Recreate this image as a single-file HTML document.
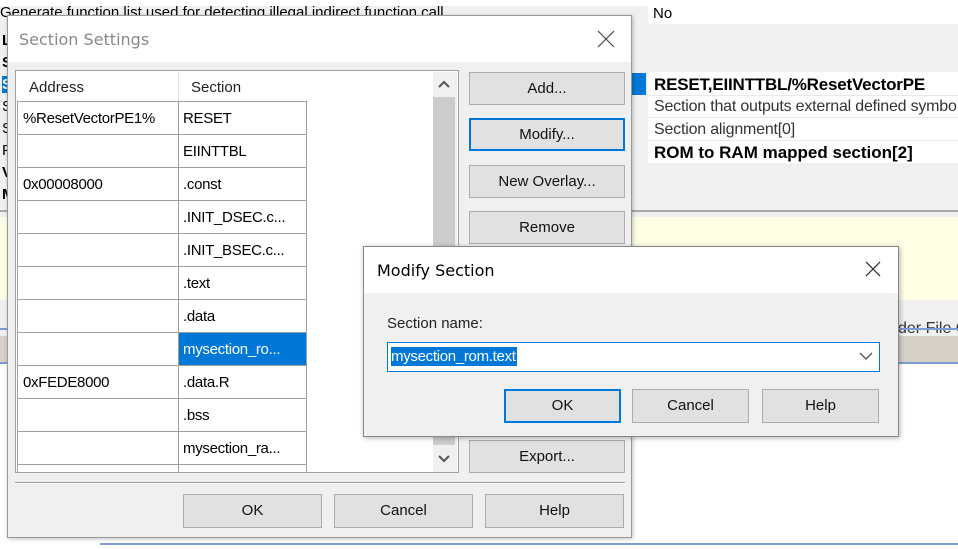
<!DOCTYPE html>
<html><head><meta charset="utf-8"><style>
*{box-sizing:border-box;margin:0;padding:0}
body{width:958px;height:549px;overflow:hidden;background:#f0f0f0;font-family:"Liberation Sans",sans-serif;font-size:15px;color:#000;position:relative}
.a{position:absolute}
.btn{position:absolute;background:#e1e1e1;border:1px solid #adadad;text-align:center;font-size:15px;color:#111}
.btn.f{border:2px solid #0078d7}
.cell{position:absolute;height:33px;border-right:1px solid #a0a0a0;border-bottom:1px solid #a0a0a0;background:#fff;padding:8px 0 0 5px;white-space:nowrap;overflow:hidden;font-size:15px;letter-spacing:-0.3px}
</style></head><body>
<!-- background app -->
<div class="a" style="left:0;top:0;width:958px;height:6px;background:#fff"></div>
<div class="a" style="left:0;top:4px;font-size:15px;white-space:nowrap">Generate function list used for detecting illegal indirect function call</div>
<div class="a" style="left:648px;top:2px;width:310px;height:22px;background:#fff;padding:3px 5px">No</div>
<div class="a" style="left:2px;top:30px;font-weight:bold;line-height:22px;font-size:15px">L<br>S<br><span style="background:#0078d7;color:#fff">S</span><br><span style="font-weight:normal">S<br>S<br>F</span><br>V<br>M</div>
<div class="a" style="left:632px;top:73px;width:14px;height:22px;background:#0078d7"></div>
<div class="a" style="left:648px;top:72px;width:310px;height:91px;background:#fff"></div>
<div class="a" style="left:648px;top:95px;width:310px;height:1px;background:#e8e8e8"></div>
<div class="a" style="left:648px;top:117px;width:310px;height:1px;background:#e8e8e8"></div>
<div class="a" style="left:648px;top:140px;width:310px;height:1px;background:#e8e8e8"></div>
<div class="a" style="left:654px;top:75px;font-weight:bold;white-space:nowrap;font-size:17px;letter-spacing:-0.2px">RESET,EIINTTBL/%ResetVectorPE</div>
<div class="a" style="left:654px;top:98px;white-space:nowrap;color:#333;font-size:16px;letter-spacing:-0.2px">Section that outputs external defined symbo</div>
<div class="a" style="left:654px;top:121px;white-space:nowrap;color:#333;font-size:16px;letter-spacing:-0.2px">Section alignment[0]</div>
<div class="a" style="left:654px;top:143px;font-weight:bold;white-space:nowrap;font-size:17px">ROM to RAM mapped section[2]</div>
<div class="a" style="left:0;top:210px;width:958px;height:2px;background:#a8a8a8"></div>
<div class="a" style="left:0;top:217px;width:958px;height:83px;background:#ffffe6"></div>
<div class="a" style="left:0;top:300px;width:958px;height:28px;background:#f0f0f0"></div>
<div class="a" style="left:898px;top:320px;font-size:16px;color:#333;white-space:nowrap">der File C</div>
<div class="a" style="left:0;top:328px;width:958px;height:2px;background:#7a9cd0"></div>
<div class="a" style="left:0;top:336px;width:958px;height:26px;background:#d4d0c8"></div>
<div class="a" style="left:0;top:362px;width:958px;height:2px;background:#7a9cd0"></div>
<div class="a" style="left:0;top:364px;width:958px;height:185px;background:#fff"></div>
<div class="a" style="left:100px;top:543px;width:858px;height:2px;background:#7a9cd0"></div>

<!-- Section Settings dialog -->
<div class="a" style="left:7px;top:15px;width:625px;height:523px;background:#f0f0f0;border:1px solid #999;box-shadow:1px 1px 4px rgba(0,0,0,.25)"></div>
<div class="a" style="left:8px;top:16px;width:623px;height:46px;background:#fff"></div>
<div class="a" style="left:19px;top:30px;color:#888;font-family:'DejaVu Sans',sans-serif;font-size:16px">Section Settings</div>
<svg class="a" style="left:597px;top:30px" width="18" height="18"><path d="M1 1L17 17M17 1L1 17" stroke="#444" stroke-width="1.2"/></svg>
<div class="a" style="left:15px;top:70px;width:444px;height:403px;border:1px solid #a0a0a0;background:#fff;overflow:hidden">
 <div class="a" style="left:1px;top:1px;width:162px;height:30px;border-right:1px solid #e5e5e5;padding:7px 0 0 12px;font-size:15px;color:#222">Address</div>
 <div class="a" style="left:163px;top:1px;width:128px;height:30px;padding:7px 0 0 12px;font-size:15px;color:#222">Section</div>
</div>
<div class="a" style="left:0;top:0;width:460px;height:472px;overflow:hidden"><div id="rows"></div></div>
<div class="a" style="left:433px;top:72px;width:24px;height:400px;background:#f0f0f0"></div>
<div class="a" style="left:433px;top:97px;width:22px;height:348px;background:#cdcdcd"></div>
<svg class="a" style="left:438px;top:80px" width="12" height="8"><path d="M1 7L6 2L11 7" stroke="#555" stroke-width="2" fill="none"/></svg>
<svg class="a" style="left:438px;top:455px" width="12" height="8"><path d="M1 1L6 6L11 1" stroke="#555" stroke-width="2" fill="none"/></svg>
<div class="btn" style="left:469px;top:72px;width:156px;height:33px;line-height:31px">Add...</div>
<div class="btn f" style="left:469px;top:118px;width:156px;height:33px;line-height:29px">Modify...</div>
<div class="btn" style="left:469px;top:165px;width:156px;height:33px;line-height:31px">New Overlay...</div>
<div class="btn" style="left:469px;top:211px;width:156px;height:33px;line-height:31px">Remove</div>
<div class="btn" style="left:469px;top:440px;width:156px;height:33px;line-height:31px">Export...</div>
<div class="a" style="left:15px;top:482px;width:610px;height:2px;border-top:1px solid #a0a0a0;border-bottom:1px solid #fff"></div>
<div class="btn" style="left:183px;top:494px;width:139px;height:34px;line-height:32px">OK</div>
<div class="btn" style="left:334px;top:494px;width:139px;height:34px;line-height:32px">Cancel</div>
<div class="btn" style="left:485px;top:494px;width:139px;height:34px;line-height:32px">Help</div>

<!-- Modify Section dialog -->
<div class="a" style="left:363px;top:246px;width:536px;height:191px;background:#f0f0f0;border:1px solid #888;box-shadow:1px 1px 5px rgba(0,0,0,.3)"></div>
<div class="a" style="left:364px;top:247px;width:534px;height:46px;background:#fff"></div>
<div class="a" style="left:377px;top:261px;font-family:'DejaVu Sans',sans-serif;font-size:16px">Modify Section</div>
<svg class="a" style="left:865px;top:261px" width="16" height="16"><path d="M1 1L15 15M15 1L1 15" stroke="#222" stroke-width="1.2"/></svg>
<div class="a" style="left:387px;top:315px;font-size:15px;color:#222">Section name:</div>
<div class="a" style="left:387px;top:342px;width:493px;height:30px;background:#fff;border:1px solid #0078d7"></div>
<div class="a" style="left:391px;top:347px;height:19px;background:#0078d7;color:#fff;font-size:15px;padding:1px 1px 0 0;letter-spacing:-0.3px">mysection_rom.text</div>
<svg class="a" style="left:859px;top:352px" width="14" height="9"><path d="M1 1L7 7L13 1" stroke="#555" stroke-width="1.4" fill="none"/></svg>
<div class="btn f" style="left:504px;top:389px;width:117px;height:34px;line-height:30px">OK</div>
<div class="btn" style="left:632px;top:389px;width:117px;height:34px;line-height:32px">Cancel</div>
<div class="btn" style="left:762px;top:389px;width:117px;height:34px;line-height:32px">Help</div>

<script>
var d=[["%ResetVectorPE1%","RESET"],["","EIINTTBL"],["0x00008000",".const"],["",".INIT_DSEC.c..."],["",".INIT_BSEC.c..."],["",".text"],["",".data"],["","mysection_ro..."],["0xFEDE8000",".data.R"],["",".bss"],["","mysection_ra..."],["",""]];
var h="";
for(var i=0;i<d.length;i++){var y=102+i*33;var sel=i==7;
h+='<div class="cell" style="left:17px;top:'+y+'px;width:162px;border-left:1px solid #a0a0a0">'+d[i][0]+'</div>';
h+='<div class="cell" style="left:179px;top:'+y+'px;width:128px;'+(sel?'background:#0078d7;color:#fff;':'')+'padding-left:4px">'+d[i][1]+'</div>';}
h+='<div class="a" style="left:17px;top:101px;width:290px;height:1px;background:#a0a0a0"></div>';
document.getElementById("rows").innerHTML=h;
</script>
<div class="a" style="left:15px;top:472px;width:444px;height:1px;background:#a0a0a0"></div>
</body></html>
